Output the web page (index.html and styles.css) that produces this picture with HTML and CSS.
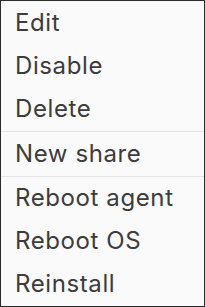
FILE: index.html
```html
<!DOCTYPE html>
<html lang="en">
<head>
    <meta charset="UTF-8">
    <meta name="viewport" content="width=device-width, initial-scale=1.0">
    <title>Menu</title>
    <link rel="stylesheet" href="styles.css">
</head>
<body>
    <div class="menu">
        <div class="group first">
            <div class="item">Edit</div>
            <div class="item">Disable</div>
            <div class="item">Delete</div>
        </div>
        <div class="group">
            <div class="item tall">New share</div>
        </div>
        <div class="group">
            <div class="item">Reboot agent</div>
            <div class="item">Reboot OS</div>
            <div class="item">Reinstall</div>
        </div>
    </div>
</body>
</html>
```

FILE: styles.css
```css
* {
    margin: 0;
    padding: 0;
    box-sizing: border-box;
}

body {
    font-family: Inter, "Noto Sans", sans-serif;
    background: #fafafa;
}

.menu {
    width: 205px;
    height: 307px;
    border: 1px solid #2b2b2b;
    background: #fafafa;
    display: flex;
    flex-direction: column;
}

.group {
    border-top: 1px solid #e4e4e4;
}

.group.first {
    border-top: none;
    padding-top: 1px;
}

.item {
    height: 43px;
    line-height: 41px;
    padding-left: 14px;
    font-size: 24px;
    letter-spacing: 0.6px;
    color: #3c3c3c;
    cursor: pointer;
}

.item.tall {
    height: 44px;
    line-height: 43px;
}
```
